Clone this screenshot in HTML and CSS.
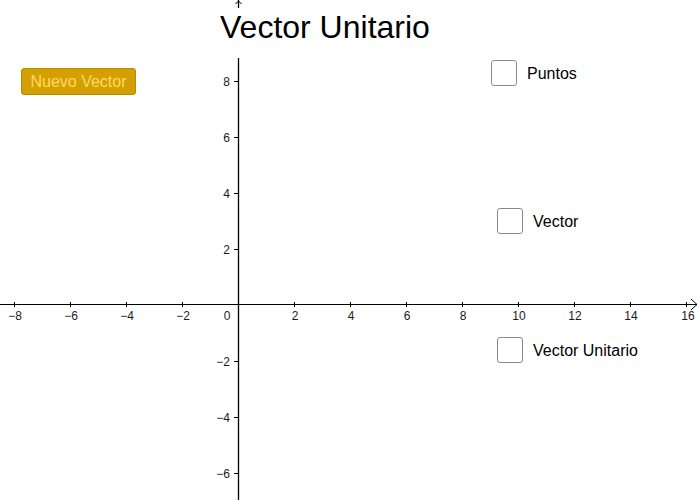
FILE: index.html
```html
<!DOCTYPE html>
<html>
<head>
<meta charset="utf-8">
<link rel="stylesheet" href="styles.css">
</head>
<body>
<div class="applet">
  <svg class="graph" width="700" height="500" viewBox="0 0 700 500">
    <g class="axes" stroke="#000" fill="none">
      <line x1="0" y1="304.5" x2="697" y2="304.5" stroke-width="1"/>
      <polyline points="691,299 697,304.5 691,310" stroke-width="1"/>
      <line x1="238.5" y1="0" x2="238.5" y2="500" stroke-width="1.3"/>
      <polyline points="235.5,4 238.5,1 241.5,4" stroke-width="1"/>
    </g>
    <g class="ticks" stroke="#000" stroke-width="1">
      <line x1="14.5" y1="302" x2="14.5" y2="307"/>
      <line x1="70.5" y1="302" x2="70.5" y2="307"/>
      <line x1="126.5" y1="302" x2="126.5" y2="307"/>
      <line x1="182.5" y1="302" x2="182.5" y2="307"/>
      <line x1="294.5" y1="302" x2="294.5" y2="307"/>
      <line x1="350.5" y1="302" x2="350.5" y2="307"/>
      <line x1="406.5" y1="302" x2="406.5" y2="307"/>
      <line x1="462.5" y1="302" x2="462.5" y2="307"/>
      <line x1="518.5" y1="302" x2="518.5" y2="307"/>
      <line x1="574.5" y1="302" x2="574.5" y2="307"/>
      <line x1="630.5" y1="302" x2="630.5" y2="307"/>
      <line x1="686.5" y1="302" x2="686.5" y2="307"/>
      <line x1="234" y1="81.5" x2="238" y2="81.5"/>
      <line x1="234" y1="137.5" x2="238" y2="137.5"/>
      <line x1="234" y1="193.5" x2="238" y2="193.5"/>
      <line x1="234" y1="249.5" x2="238" y2="249.5"/>
      <line x1="234" y1="361.5" x2="238" y2="361.5"/>
      <line x1="234" y1="417.5" x2="238" y2="417.5"/>
      <line x1="234" y1="473.5" x2="238" y2="473.5"/>
    </g>
    <g class="xlabels" text-anchor="middle">
      <text x="15" y="320">−8</text>
      <text x="71" y="320">−6</text>
      <text x="127" y="320">−4</text>
      <text x="183" y="320">−2</text>
      <text x="227" y="320">0</text>
      <text x="295" y="320">2</text>
      <text x="351" y="320">4</text>
      <text x="407" y="320">6</text>
      <text x="463" y="320">8</text>
      <text x="519" y="320">10</text>
      <text x="575" y="320">12</text>
      <text x="631" y="320">14</text>
      <text x="688" y="320">16</text>
    </g>
    <g class="ylabels" text-anchor="end">
      <text x="230" y="86">8</text>
      <text x="230" y="142">6</text>
      <text x="230" y="198">4</text>
      <text x="230" y="254">2</text>
      <text x="230" y="366">−2</text>
      <text x="230" y="422">−4</text>
      <text x="230" y="478">−6</text>
    </g>
  </svg>

  <div class="title">Vector Unitario</div>

  <button class="btn">Nuevo Vector</button>

  <label class="check check-puntos"><span class="box"></span><span class="lbl">Puntos</span></label>
  <label class="check check-vector"><span class="box"></span><span class="lbl">Vector</span></label>
  <label class="check check-unit"><span class="box"></span><span class="lbl">Vector Unitario</span></label>
</div>
</body>
</html>
```

FILE: styles.css
```css
html, body {
  margin: 0;
  padding: 0;
  background: #fff;
}

.applet {
  position: relative;
  width: 700px;
  height: 500px;
  overflow: hidden;
  font-family: "Liberation Sans", Arial, sans-serif;
  color: #000;
}

.graph {
  position: absolute;
  left: 0;
  top: 0;
  display: block;
}

.graph text {
  font-family: "Liberation Sans", Arial, sans-serif;
  font-size: 12px;
  fill: #1a1a1a;
}

.title {
  position: absolute;
  left: 216px;
  top: 8px;
  height: 50px;
  padding: 1px 4px 0 4px;
  box-sizing: border-box;
  background: #fff;
  font-size: 32px;
  line-height: normal;
  white-space: nowrap;
}

.btn {
  position: absolute;
  left: 21px;
  top: 68px;
  width: 115px;
  height: 27px;
  margin: 0;
  padding: 0;
  box-sizing: border-box;
  border: 1px solid #b88c00;
  border-radius: 3px;
  background: #d4a000;
  color: #ffd966;
  font-family: "Liberation Sans", Arial, sans-serif;
  font-size: 16px;
  line-height: 25px;
  text-align: center;
}

.check {
  position: absolute;
  display: flex;
  align-items: center;
  gap: 10px;
  font-size: 16px;
  white-space: nowrap;
}

.check-puntos { left: 491px; top: 60px; }
.check-vector { left: 497px; top: 208px; }
.check-unit { left: 497px; top: 337px; }

.box {
  display: block;
  width: 26px;
  height: 26px;
  box-sizing: border-box;
  border: 1px solid #8a8a8a;
  border-radius: 3px;
  background: #fff;
}

.lbl {
  display: block;
  padding-top: 2px;
}
```
